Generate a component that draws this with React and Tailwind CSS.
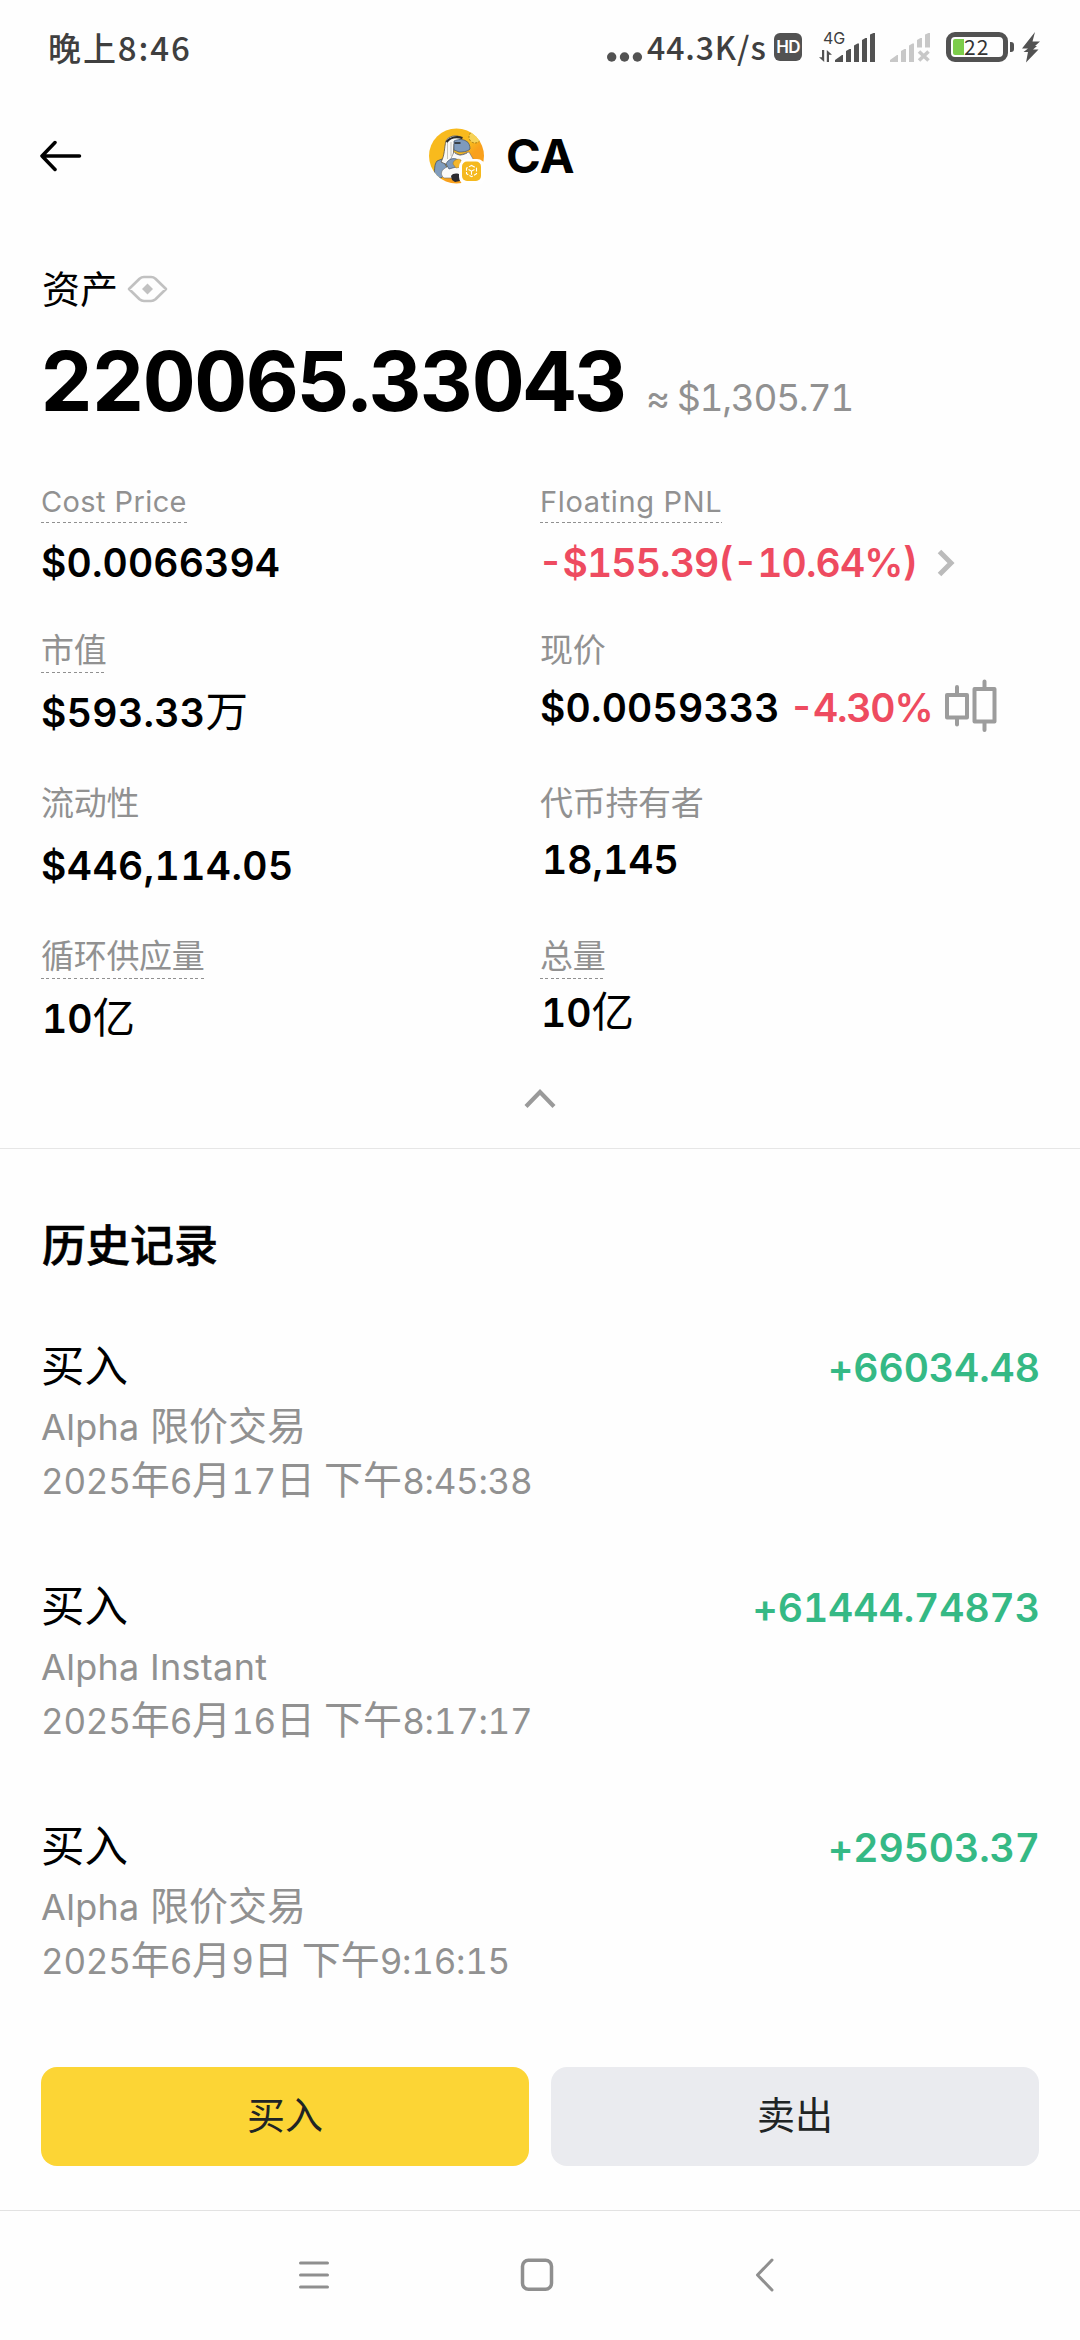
import React from "react";

const DASH =
  "h-px w-full bg-[repeating-linear-gradient(90deg,#909090_0_3px,transparent_3px_5.500px)]";

/* Splits a string so that Chinese runs get their own size and weight. */
function Mixed({ text, cjk }) {
  return text
    .split(/([\u4e00-\u9fff]+)/)
    .filter(Boolean)
    .map((part, i) =>
      /[\u4e00-\u9fff]/.test(part) ? (
        <span key={i} className={cjk}>
          {part}
        </span>
      ) : (
        part
      )
    );
}

function StatusBar() {
  return (
    <div className="flex h-[94px] items-center pl-[48px] font-['Noto_Sans_CJK_SC',sans-serif] font-medium text-[#3f3f3f]">
      <span className="mt-[-1px] w-[300px] text-[33px] leading-[48px] tracking-[1.900px] whitespace-nowrap">晚上8:46</span>
      <svg className="mt-[20px] ml-[259px] shrink-0" width="37" height="10" fill="#525252">
        <circle cx="4.700" cy="5" r="4.700" />
        <circle cx="17.500" cy="5" r="4.700" />
        <circle cx="30.400" cy="5" r="4.700" />
      </svg>
      <span className="mt-[-2px] ml-[3px] w-[118px] text-[32px] leading-[48px] tracking-[0.900px] whitespace-nowrap">44.3K/s</span>
      <span className="ml-[9px] flex h-7 w-7 shrink-0 items-center justify-center rounded-[6px] bg-[#525252] font-['Inter',sans-serif] text-[17px] leading-none font-semibold tracking-[-0.800px] text-white">
        HD
      </span>
      <div className="ml-[17px] flex h-[32px] w-[57px] shrink-0">
        <div className="flex w-[16px] flex-col">
          <span className="ml-[4px] w-6 font-['Inter',sans-serif] text-[16px] leading-[15px] font-normal">4G</span>
          <svg className="mt-[4px]" width="13" height="12" fill="#525252">
            <path d="M3 0h2.200v12L0 7.200h3zM7.800 0l5.200 4.800h-3V12H7.800z" />
          </svg>
        </div>
        <svg className="mt-[2px]" width="41" height="29" fill="#525252">
          <path d="M0 29v-2l7-5h1v7zM11 29V18l3.500-2H16v13zM19 29V12.500l3.500-2H24v18.500zM27 29V7l3.500-2H32v24zM35 29V1.500L38.500 0H40v29z" />
        </svg>
      </div>
      <svg className="ml-[14px] shrink-0" width="41" height="29" fill="#c8c8c8">
        <path d="M0 29v-2l7-5h1v7zM11 29V18l3.500-2H16v13zM19 29V12.500l3.500-2H24v18.500zM27 14.500V7l3.500-2H32v9.500zM35 14.500V1.500L38.500 0H40v14.500z" />
        <path d="M29 18.500l9.500 9M38.500 18.500l-9.500 9" stroke="#c8c8c8" strokeWidth="3.600" />
      </svg>
      <div className="ml-[15px] flex h-[30px] w-[62px] shrink-0 items-center rounded-[9px] border-[5px] border-[#525252] pl-[2px]">
        <div className="h-4 w-[11px] rounded-l-[2px] bg-[#7dcd4b]" />
        <span className="mt-[-2px] text-[21px] leading-[20px] font-normal tracking-[1.200px] text-[#333]">22</span>
      </div>
      <div className="ml-[2px] h-[10px] w-[4px] shrink-0 rounded-r-[3px] bg-[#525252]" />
      <svg className="ml-[7px] shrink-0" width="20" height="31" fill="#525252">
        <path d="M14 0L1 16.500h6L2.500 20H7L5 30.500 17.500 17.500H12L16 14H14L19 9.500H11.500z" />
      </svg>
    </div>
  );
}

function TokenLogo() {
  return (
    <svg width="56" height="57" viewBox="0 0 56 57">
      <defs>
        <linearGradient id="sun" x1="0" y1="0" x2="1" y2="1">
          <stop offset=".5" stopColor="#f8ba1d" />
          <stop offset=".62" stopColor="#f9a01c" />
        </linearGradient>
        <clipPath id="disc">
          <circle cx="27.500" cy="28" r="27.500" />
        </clipPath>
      </defs>
      <g clipPath="url(#disc)">
        <rect width="56" height="57" fill="url(#sun)" />
        <circle cx="46" cy="9" r="6" fill="#f6d257" stroke="#a47b17" strokeWidth="1" strokeDasharray="2 1.500" />
        <path d="M5 46c1-5 0-9 3-13l5-2 7 12-8 7-6 0z" fill="#819dbd" stroke="#3d4a5c" strokeWidth=".7" />
        <path d="M17 13c2-5 11-7 16-3l-8 6-1 17-3 5-9-4c4-7 3-14 5-21z" fill="#f9f9f7" stroke="#55524c" strokeWidth=".8" />
        <path d="M18.500 14v17M22 14v14" stroke="#b8b5ae" strokeWidth=".8" />
        <path d="M17.500 14c3-4 9-6 16-4" fill="none" stroke="#2c2c2c" strokeWidth="2.200" />
        <path d="M25 13c4-2 9-2 12 0 3 1 4 5 4 8-3 3-8 3-11 3l-5-2z" fill="#7e9abc" stroke="#42536b" strokeWidth=".7" />
        <path d="M25.500 15h6" stroke="#222" strokeWidth="1.400" />
        <path d="M25 24l6 3 9-3 7 12-8 14-24 0c-5-4-2-9 3-11z" fill="#fafafa" stroke="#6d6d6d" strokeWidth=".6" />
        <path d="M26 25c4 3 8 2 12 0" fill="none" stroke="#5a5a5a" strokeWidth=".8" />
        <path d="M17 36c2-5 8-7 12-4l-2 7-7 2z" fill="#7e9abc" stroke="#42536b" strokeWidth=".7" />
        <path d="M24 36c0-4 5-6 8-4v7l-5 1z" fill="#f5b72c" stroke="#9b7420" strokeWidth=".5" />
        <path d="M22 48c2-3 7-3 9-1v6l-5 1-3-2z" fill="#2a2a30" />
      </g>
      <rect x="30" y="31" width="26" height="26" rx="8" fill="#fff" />
      <rect x="33" y="33.500" width="19" height="19.500" rx="5" fill="#f5b91e" />
      <g fill="none" stroke="#fff" strokeWidth="1.100">
        <path d="M42.500 37.500l5 2.700v5.600l-5 2.900-5-2.900v-5.600z" strokeDasharray="3.800 1.400" />
        <path d="M39.500 41.500l3 1.700 3-1.700M42.500 43.200v3.500" />
      </g>
    </svg>
  );
}

function Header() {
  return (
    <div className="flex h-[124px] items-center pl-[40px]">
      <svg width="42" height="32" fill="none" stroke="#000" strokeWidth="3.500" strokeLinecap="round" strokeLinejoin="round">
        <path d="M15 2.500L2 16 15 29.500M2 16h37.500" />
      </svg>
      <div className="ml-[347px] flex items-center">
        <TokenLogo />
        <h1 className="ml-[21px] text-[47px] leading-[60px] font-bold">CA</h1>
      </div>
    </div>
  );
}

function Balance() {
  return (
    <div>
      <div className="mt-[46px] flex h-[50px] items-center pl-[42px]">
        <span className="text-[38px] leading-[50px]">资产</span>
        <svg className="ml-[9px]" width="41" height="28" fill="none" stroke="#c1c1c1" strokeWidth="2.600" strokeLinejoin="round">
          <path d="M2 14L12.500 3.700Q14.500 2 17 2h7q2.500 0 4.500 1.700L39 14 28.500 24.300Q26.500 26 24 26h-7q-2.500 0-4.500-1.700z" />
          <path d="M20.500 8.500l5.500 5.500-5.500 5.500-5.500-5.500z" fill="#c1c1c1" stroke="none" />
        </svg>
      </div>
      <div className="mt-[18px] flex h-[100px] items-baseline pl-[40px] tabular-nums">
        <span className="w-[606px] text-[82px] leading-[100px] font-bold tracking-[-1.600px]">220065.33043</span>
        <span className="w-[31px] text-[37px] text-[#919191]">≈</span>
        <span className="text-[37px] tracking-[-1.300px] text-[#919191]">$1,305.71</span>
      </div>
    </div>
  );
}

function Stat({ label, dashed, labelClass, height, children }) {
  return (
    <div className={height}>
      <div className="flex h-[41px] w-fit flex-col">
        <span className={"h-[40px] whitespace-nowrap text-[#919191] " + labelClass}>{label}</span>
        {dashed && <div className={DASH} />}
      </div>
      {children}
    </div>
  );
}

const CN_LABEL = "text-[33px] leading-[37px] tracking-[-0.300px]";
const EN_LABEL = "text-[29px] leading-[40px] ";
const VALUE =
  "text-[39px] leading-[56px] font-semibold whitespace-nowrap [font-feature-settings:'tnum','case'] ";
const UNIT = "text-[42.500px] leading-none font-normal tracking-normal";

function ChevronRight() {
  return (
    <svg width="20" height="28" fill="none" stroke="#bbb" strokeWidth="5">
      <path d="M2.500 2.500L14 14 2.500 25.500" />
    </svg>
  );
}

function Candles() {
  return (
    <svg className="mt-[-4px]" width="54" height="54" fill="none" stroke="#9c9c9c" strokeWidth="4" strokeLinejoin="round" strokeLinecap="round">
      <path d="M3 16h20v22.500H3zM13 8v8M13 38.500v7M30.500 10H50.500v32.500H30.500zM40.500 2.500V10M40.500 42.500v8.500" />
    </svg>
  );
}

function Stats() {
  const row = "h-[153px]";
  return (
    <div className="mt-[50px] grid grid-cols-[499px_1fr] pl-[41px]">
      <Stat label="Cost Price" dashed labelClass={EN_LABEL + "tracking-[0.400px]"} height="h-[150px]">
        <div className={VALUE + "mt-[12px] tracking-[0.150px]"}>$0.0066394</div>
      </Stat>
      <Stat label="Floating PNL" dashed labelClass={EN_LABEL + "tracking-[0.650px]"} height="h-[150px]">
        <div className="mt-[12px] flex items-center">
          <span className={VALUE + "ml-[-2px] w-[399px] tracking-[-0.850px] text-[#ee4b60]"}>-$155.39(-10.64%)</span>
          <ChevronRight />
        </div>
      </Stat>
      <Stat label="市值" dashed labelClass={CN_LABEL} height={row}>
        <div className={VALUE + "mt-[12px] tracking-[0.350px]"}>
          <Mixed text="$593.33万" cjk={UNIT} />
        </div>
      </Stat>
      <Stat label="现价" labelClass={CN_LABEL} height={row}>
        <div className="mt-[7px] flex h-14 items-center">
          <span className={VALUE + "w-[249px] tracking-[0.200px]"}>$0.0059333</span>
          <span className={VALUE + "w-[155px] tracking-[-1.200px] text-[#ee4b60]"}>-4.30%</span>
          <Candles />
        </div>
      </Stat>
      <Stat label="流动性" labelClass={CN_LABEL} height={row}>
        <div className={VALUE + "mt-[12px] tracking-[0.400px]"}>$446,114.05</div>
      </Stat>
      <Stat label="代币持有者" labelClass={CN_LABEL} height={row}>
        <div className={VALUE + "mt-[6px] pl-[2px]"}>18,145</div>
      </Stat>
      <Stat label="循环供应量" dashed labelClass={CN_LABEL} height="h-[129px]">
        <div className={VALUE + "mt-[12px] pl-px"}>
          <Mixed text="10亿" cjk={UNIT} />
        </div>
      </Stat>
      <Stat label="总量" dashed labelClass={CN_LABEL} height="h-[129px]">
        <div className={VALUE + "mt-[6px] pl-px"}>
          <Mixed text="10亿" cjk={UNIT} />
        </div>
      </Stat>
    </div>
  );
}

const HISTORY = [
  { amount: "+66034.48", kind: "Alpha 限价交易", date: "2025年6月17日 下午8:45:38" },
  { amount: "+61444.74873", kind: "Alpha Instant", date: "2025年6月16日 下午8:17:17" },
  { amount: "+29503.37", kind: "Alpha 限价交易", date: "2025年6月9日 下午9:16:15" },
];

function HistoryItem({ amount, kind, date }) {
  return (
    <div className="h-60 pr-[40px] pl-[41px]">
      <div className="flex h-[60px] items-baseline justify-between">
        <span className="text-[43.500px] leading-[60px]">买入</span>
        <span className="text-[39px] leading-[60px] font-semibold tracking-[-0.050px] text-[#35b985] tabular-nums">{amount}</span>
      </div>
      <div className="mt-[4px] h-[54px] text-[36px] leading-[54px] tracking-[0.300px] text-[#919191]">
        <Mixed text={kind} cjk="text-[39px] leading-none tracking-normal" />
      </div>
      <div className="text-[35px] leading-[55px] tracking-[-0.280px] text-[#919191] tabular-nums">
        <Mixed text={date} cjk="text-[39px] leading-none tracking-normal" />
      </div>
    </div>
  );
}

function ActionButton({ label, className }) {
  return (
    <button className={"flex h-[99px] flex-1 items-center justify-center rounded-[16px] pb-[4px] text-[38px] leading-none text-[#202425] " + className}>
      {label}
    </button>
  );
}

function NavBar() {
  return (
    <div className="flex h-[130px] items-start border-t border-[#e2e2e2] pt-[47px]">
      <svg className="ml-[298px]" width="32" height="36" stroke="#8f8f8f" strokeWidth="3" strokeLinecap="round">
        <path d="M2.500 5h27M2.500 17h27M2.500 29h27" />
      </svg>
      <svg className="ml-[189px]" width="36" height="36" fill="none" stroke="#8f8f8f" strokeWidth="3.500">
        <rect x="3.500" y="2.200" width="29" height="29" rx="6" />
      </svg>
      <svg className="ml-[199px]" width="22" height="36" fill="none" stroke="#8f8f8f" strokeWidth="3" strokeLinecap="round" strokeLinejoin="round">
        <path d="M18 2L3.500 17 18 32" />
      </svg>
    </div>
  );
}

export default function App() {
  return (
    <div className="flex h-[2340px] w-[1080px] flex-col overflow-hidden bg-[#fefefe] font-['Inter','Noto_Sans_CJK_SC',sans-serif] text-black">
      <StatusBar />
      <Header />
      <Balance />
      <Stats />
      <div className="flex h-[82px] justify-center border-b border-[#e6e6e6] pt-[20px]">
        <svg width="34" height="22" fill="none" stroke="#9a9a9a" strokeWidth="4.200">
          <path d="M3 19.500L17 5l14 14.500" />
        </svg>
      </div>
      <h2 className="mt-[67px] h-[60px] pl-[42px] text-[44px] leading-[60px] font-medium [-webkit-text-stroke:0.600px_#000]">历史记录</h2>
      <div className="mt-[60px] h-[731px]">
        {HISTORY.map((item) => (
          <HistoryItem key={item.date} {...item} />
        ))}
      </div>
      <div className="flex gap-[22px] px-[41px]">
        <ActionButton label="买入" className="bg-[#fcd535]" />
        <ActionButton label="卖出" className="bg-[#eaebef]" />
      </div>
      <div className="mt-auto">
        <NavBar />
      </div>
    </div>
  );
}
